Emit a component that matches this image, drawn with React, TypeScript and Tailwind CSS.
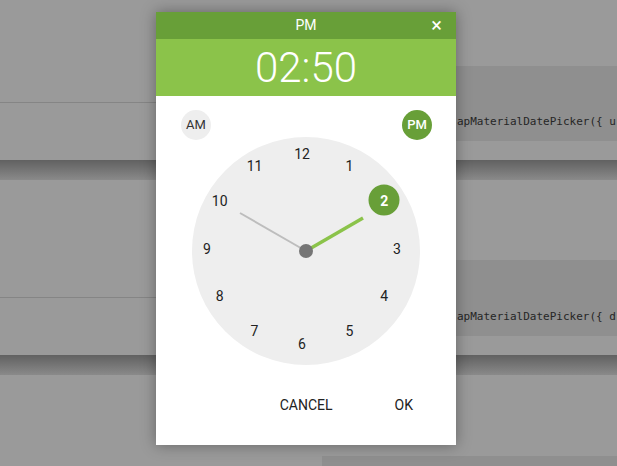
import React from "react";

const nums = [
  { n: "12", a: 0 },
  { n: "1", a: 30 },
  { n: "2", a: 60 },
  { n: "3", a: 90 },
  { n: "4", a: 120 },
  { n: "5", a: 150 },
  { n: "6", a: 180 },
  { n: "7", a: 210 },
  { n: "8", a: 240 },
  { n: "9", a: 270 },
  { n: "10", a: 300 },
  { n: "11", a: 330 },
];

function Clock() {
  const cx = 110;
  const cy = 111.5;
  const r = 95;
  return (
    <div className="relative w-[228px] h-[228px]">
      <svg width="228" height="228" className="absolute left-0 top-0">
        <circle cx="114" cy="114" r="114" fill="#eeeeee" />
        <line x1="114" y1="114" x2="48" y2="76" stroke="#bdbdbd" strokeWidth="2" />
        <line x1="114" y1="114" x2="171" y2="81" stroke="#8bc34a" strokeWidth="3.5" />
        <circle cx="114" cy="114" r="7" fill="#757575" />
        <circle cx="192" cy="63" r="15.5" fill="#689f38" />
      </svg>
      {nums.map(({ n, a }) => {
        const rad = (a * Math.PI) / 180;
        const x = cx + r * Math.sin(rad);
        const y = cy - r * Math.cos(rad);
        const sel = n === "2";
        return (
          <div
            key={n}
            className={
              "absolute w-[30px] h-[20px] -ml-[15px] -mt-[10px] flex items-center justify-center text-[14px] leading-none " +
              (sel ? "text-white font-bold" : "text-[#222222]")
            }
            style={{ left: x, top: y }}
          >
            {n}
          </div>
        );
      })}
    </div>
  );
}

export default function App() {
  return (
    <div className="relative w-[617px] h-[466px] overflow-hidden bg-[#999999]">
      {/* background page */}
      <div className="flex flex-col">
        {/* card 1 */}
        <div className="flex h-[160px] bg-[#9a9a9a]">
          <div className="flex-1 pt-[102px]">
            <div className="h-px bg-[#858585]" />
          </div>
          <div className="w-[161px] pt-[66px]">
            <div className="h-[75px] bg-[#8f8f8f] pt-[49px] pl-[1px] text-[11px] leading-[14px] text-[#262626] whitespace-nowrap overflow-hidden" style={{ fontFamily: '"DejaVu Sans Mono", monospace' }}>
              apMaterialDatePicker({"{"} u
            </div>
          </div>
        </div>
        <div className="h-[20px] bg-gradient-to-b from-[#616161] to-[#8a8a8a]" />
        {/* card 2 */}
        <div className="flex h-[175px] bg-[#9a9a9a]">
          <div className="flex-1 pt-[117px]">
            <div className="h-px bg-[#858585]" />
          </div>
          <div className="w-[161px] pt-[80px]">
            <div className="h-[76px] bg-[#8f8f8f] pt-[50px] pl-[1px] text-[11px] leading-[14px] text-[#262626] whitespace-nowrap overflow-hidden" style={{ fontFamily: '"DejaVu Sans Mono", monospace' }}>
              apMaterialDatePicker({"{"} d
            </div>
          </div>
        </div>
        <div className="h-[20px] bg-gradient-to-b from-[#616161] to-[#8a8a8a]" />
        {/* card 3 */}
        <div className="flex h-[120px] bg-[#9a9a9a]">
          <div className="w-[322px]" />
          <div className="flex-1 pt-[81px]">
            <div className="h-[60px] bg-[#8f8f8f]" />
          </div>
        </div>
      </div>

      {/* dialog */}
      <div
        className="absolute left-[156px] top-[12px] w-[300px] h-[433px] bg-white flex flex-col shadow-[0_0_14px_rgba(0,0,0,0.35)]"
        style={{ fontFamily: "Roboto, sans-serif" }}
      >
        <div className="relative h-[27px] bg-[#689f38] flex items-center justify-center text-white text-[14px]">
          PM
          <span className="absolute right-[14px] top-[2px] text-[20px] leading-[22px]">×</span>
        </div>
        <div className="h-[57px] bg-[#8bc34a] flex items-center justify-center text-white text-[42px] font-light leading-none pt-[1px]">
          02:50
        </div>
        <div className="flex flex-col">
          <div className="flex justify-between px-[25px] pt-[14px] pr-[24px]">
            <div className="w-[30px] h-[30px] rounded-full bg-[#eeeeee] flex items-center justify-center text-[13px] text-[#333333]">
              AM
            </div>
            <div className="w-[30px] h-[30px] rounded-full bg-[#689f38] flex items-center justify-center text-[13px] font-medium text-white">
              PM
            </div>
          </div>
          <div className="flex justify-center -mt-[3px]">
            <Clock />
          </div>
          <div className="flex justify-end items-center gap-[62px] pr-[43px] mt-[30px] text-[14px] text-[#222222]">
            <span>CANCEL</span>
            <span>OK</span>
          </div>
        </div>
      </div>
    </div>
  );
}
